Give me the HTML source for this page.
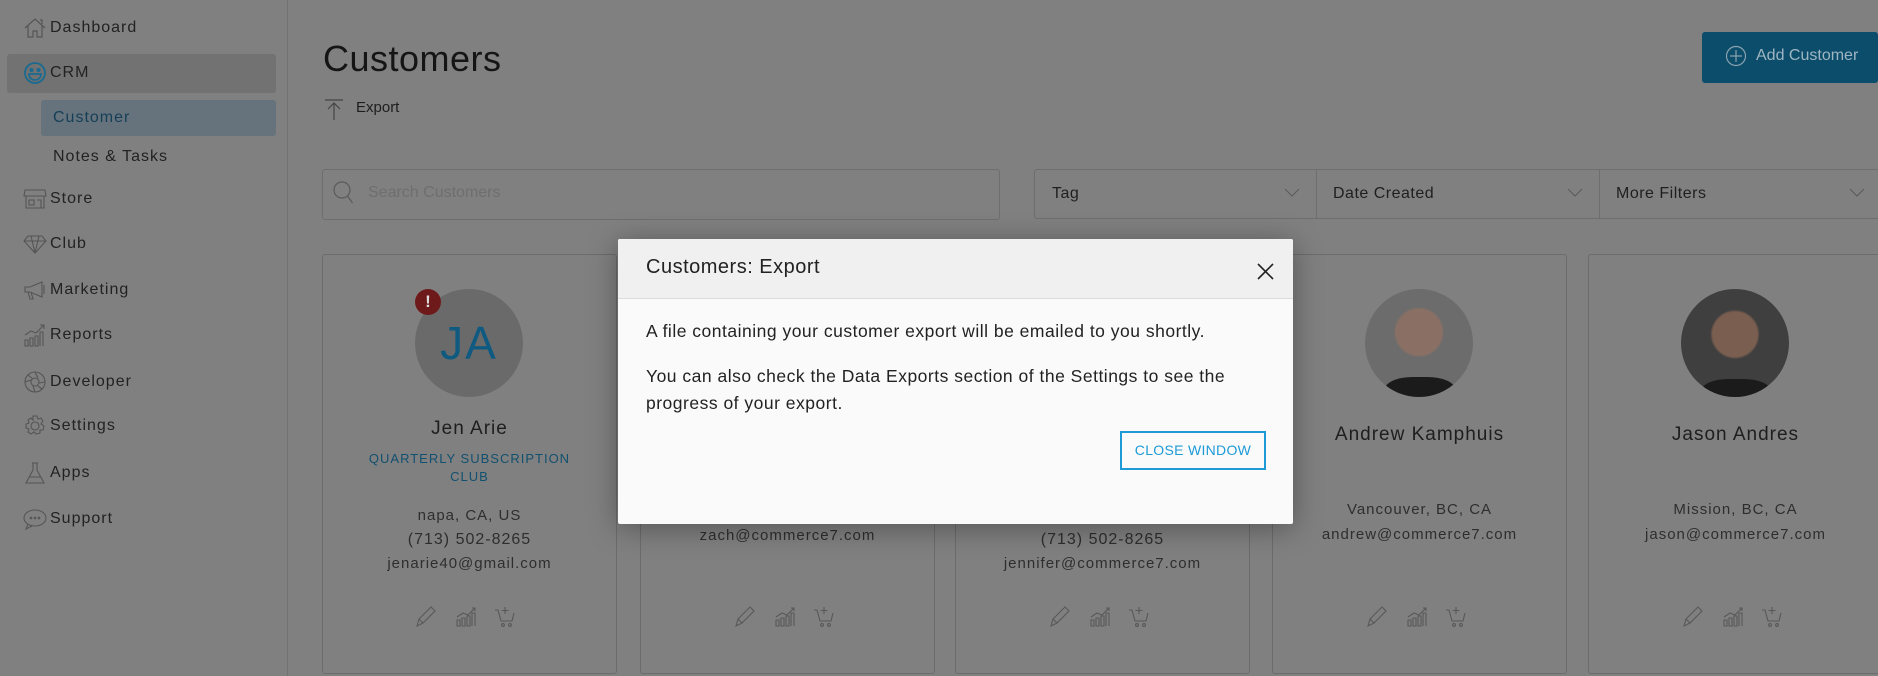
<!DOCTYPE html>
<html><head><meta charset="utf-8">
<style>
*{box-sizing:border-box;margin:0;padding:0}
body{width:1878px;height:676px;overflow:hidden;background:#808080;font-family:"Liberation Sans",sans-serif;position:relative;color:#1c1c1c}
.abs{position:absolute}
.side{left:0;top:0;width:288px;height:676px;border-right:1px solid #727272}
.nav{left:50px;font-size:16px;letter-spacing:1px;color:#222}
.ico{left:22px;width:26px;height:26px}
.card{border:1px solid #6c6c6c;border-radius:3px;width:295px;height:420px;top:254px}
.ctext{width:295px;text-align:center;letter-spacing:1px;font-size:15px;color:#2e2e2e}
.filt{top:169px;height:50px;border:1px solid #6e6e6e;font-size:16px;color:#1f1f1f;padding:15px 17px;letter-spacing:.5px}
</style></head><body>
<div class="abs side"></div>
<!-- sidebar -->
<div class="abs" style="left:7px;top:54px;width:269px;height:39px;background:#727272;border-radius:3px"></div>
<div class="abs" style="left:41px;top:100px;width:235px;height:36px;background:#66737c;border-radius:3px"></div>
<svg class="abs ico" style="top:15px" viewBox="0 0 26 26" fill="none" stroke="#555" stroke-width="1.2"><path d="M3 13L13 4l10 9M6 11v11h5v-6h4v6h5V11M18 5h2v4"/></svg>
<div class="abs nav" style="top:19px">Dashboard</div>
<svg class="abs ico" style="top:60px" viewBox="0 0 26 26" fill="none" stroke="#1a6a90" stroke-width="1.8"><circle cx="13" cy="13" r="10"/><circle cx="9.5" cy="10" r="1.2"/><circle cx="16.5" cy="10" r="1.2"/><path d="M7 14h12c0 4-3 6-6 6s-6-2-6-6z"/></svg>
<div class="abs nav" style="top:64px">CRM</div>
<div class="abs nav" style="top:109px;left:53px;color:#153f57">Customer</div>
<div class="abs nav" style="top:148px;left:53px">Notes &amp; Tasks</div>
<svg class="abs ico" style="top:186px" viewBox="0 0 26 26" fill="none" stroke="#555" stroke-width="1.1"><path d="M3 4h20l1 6H2zM4 10v12h18V10M7 14h5v5H7zM15 14h4v8"/></svg>
<div class="abs nav" style="top:190px">Store</div>
<svg class="abs ico" style="top:231px" viewBox="0 0 26 26" fill="none" stroke="#555" stroke-width="1.1"><path d="M6 5h14l4 5-11 12L2 10zM2 10h22M9 5l4 17 4-17"/></svg>
<div class="abs nav" style="top:235px">Club</div>
<svg class="abs ico" style="top:277px" viewBox="0 0 26 26" fill="none" stroke="#555" stroke-width="1.1"><path d="M3 10h5l12-5v15L8 15H3zM6 15l2 7h3l-2-7M22 8v9"/></svg>
<div class="abs nav" style="top:281px">Marketing</div>
<svg class="abs ico" style="top:322px" viewBox="0 0 26 26" fill="none" stroke="#555" stroke-width="1.1"><path d="M3 24v-6h3v6zM8 24v-8h3v8zM13 24v-10h3v10zM18 24V10h3v14M3 13l6-4 5 2 8-8M18 3h4v4"/></svg>
<div class="abs nav" style="top:326px">Reports</div>
<svg class="abs ico" style="top:369px" viewBox="0 0 26 26" fill="none" stroke="#555" stroke-width="1.1"><circle cx="13" cy="13" r="10"/><circle cx="13" cy="13" r="4"/><path d="M13 3l3 6M23 13l-6 1M13 23l-2-6M3 13l6-2M6 6l5 4M20 20l-4-3"/></svg>
<div class="abs nav" style="top:373px">Developer</div>
<svg class="abs ico" style="top:413px" viewBox="0 0 26 26" fill="none" stroke="#555" stroke-width="1.1"><circle cx="13" cy="13" r="4"/><path d="M11 3h4l1 3 3-1 2 3-2 3 3 2-1 4-3 0 0 3-4 1-2-2-3 2-3-2 1-3-3-1 0-4 3-1-1-3 3-2 2 2z"/></svg>
<div class="abs nav" style="top:417px">Settings</div>
<svg class="abs ico" style="top:460px" viewBox="0 0 26 26" fill="none" stroke="#555" stroke-width="1.1"><path d="M10 3h6M11 3v7L4 23h18L15 10V3M7 17h12"/></svg>
<div class="abs nav" style="top:464px">Apps</div>
<svg class="abs ico" style="top:506px" viewBox="0 0 26 26" fill="none" stroke="#555" stroke-width="1.1"><ellipse cx="13" cy="12" rx="11" ry="8"/><path d="M6 18l-2 5 6-3"/><circle cx="9" cy="12" r=".8"/><circle cx="13" cy="12" r=".8"/><circle cx="17" cy="12" r=".8"/></svg>
<div class="abs nav" style="top:510px">Support</div>

<!-- main header -->
<div class="abs" style="left:323px;top:38px;font-size:36px;color:#151515;letter-spacing:.5px">Customers</div>
<svg class="abs" style="left:324px;top:98px" width="20" height="24" viewBox="0 0 20 24" fill="none" stroke="#444" stroke-width="1.2"><path d="M1 2h18M10 22V5M4 11l6-6 6 6"/></svg>
<div class="abs" style="left:356px;top:99px;font-size:15px;color:#1e1e1e">Export</div>
<div class="abs" style="left:1702px;top:32px;width:176px;height:51px;background:#0b4d6b;border-radius:3px"></div>
<svg class="abs" style="left:1725px;top:45px" width="22" height="22" viewBox="0 0 22 22" fill="none" stroke="#8aa3b1" stroke-width="1.2"><circle cx="11" cy="11" r="9.5"/><path d="M11 5v12M5 11h12"/></svg>
<div class="abs" style="left:1756px;top:47px;font-size:16px;color:#9fb5c2">Add Customer</div>

<!-- search and filters -->
<div class="abs" style="left:322px;top:169px;width:678px;height:51px;border:1px solid #6e6e6e;border-radius:3px"></div>
<svg class="abs" style="left:332px;top:180px" width="24" height="26" viewBox="0 0 24 26" fill="none" stroke="#5a5a5a" stroke-width="1.2"><circle cx="10" cy="10" r="8"/><path d="M15.5 16l5 7"/></svg>
<div class="abs" style="left:368px;top:184px;font-size:16px;color:#6e6e6e">Search Customers</div>
<div class="abs filt" style="left:1034px;width:283px;border-radius:3px 0 0 3px">Tag</div>
<div class="abs filt" style="left:1316px;width:284px;border-left:none">Date Created</div>
<div class="abs filt" style="left:1599px;width:290px;border-left:none">More Filters</div>
<svg class="abs" style="left:1284px;top:188px" width="16" height="10" viewBox="0 0 16 10" fill="none" stroke="#5a5a5a"><path d="M1 1l7 7 7-7"/></svg>
<svg class="abs" style="left:1567px;top:188px" width="16" height="10" viewBox="0 0 16 10" fill="none" stroke="#5a5a5a"><path d="M1 1l7 7 7-7"/></svg>
<svg class="abs" style="left:1849px;top:188px" width="16" height="10" viewBox="0 0 16 10" fill="none" stroke="#5a5a5a"><path d="M1 1l7 7 7-7"/></svg>

<!-- cards -->
<div class="abs card" style="left:322px"></div>
<div class="abs card" style="left:640px"></div>
<div class="abs card" style="left:955px"></div>
<div class="abs card" style="left:1272px"></div>
<div class="abs card" style="left:1588px"></div>

<div class="abs" style="left:415px;top:289px;width:108px;height:108px;border-radius:50%;background:#6a6a6a"></div>
<div class="abs" style="left:415px;top:316px;width:108px;text-align:center;font-size:46px;color:#0e5a80;letter-spacing:2px">JA</div>
<div class="abs" style="left:415px;top:289px;width:26px;height:26px;border-radius:50%;background:#6e1a1a;color:#ddd;text-align:center;font-weight:bold;font-size:17px;line-height:26px">!</div>
<div class="abs ctext" style="left:322px;top:418px;font-size:19px;color:#1e1e1e">Jen Arie</div>
<div class="abs ctext" style="left:322px;top:450px;font-size:13px;color:#11506f;line-height:18px">QUARTERLY SUBSCRIPTION<br>CLUB</div>
<div class="abs ctext" style="left:322px;top:507px">napa, CA, US</div>
<div class="abs ctext" style="left:322px;top:531px;font-size:16px">(713) 502-8265</div>
<div class="abs ctext" style="left:322px;top:555px">jenarie40@gmail.com</div>

<div class="abs ctext" style="left:640px;top:527px">zach@commerce7.com</div>
<div class="abs ctext" style="left:955px;top:531px;font-size:16px">(713) 502-8265</div>
<div class="abs ctext" style="left:955px;top:555px">jennifer@commerce7.com</div>

<div class="abs" style="left:1365px;top:289px;width:108px;height:108px;border-radius:50%;background:radial-gradient(circle at 50% 40%,#8a7064 0 27%,#6c6c6c 30% 100%);overflow:hidden"><div style="position:absolute;left:20px;top:88px;width:70px;height:30px;background:#1b1b1b;border-radius:40% 40% 0 0"></div></div>
<div class="abs ctext" style="left:1272px;top:424px;font-size:19px;color:#1e1e1e">Andrew Kamphuis</div>
<div class="abs ctext" style="left:1272px;top:501px">Vancouver, BC, CA</div>
<div class="abs ctext" style="left:1272px;top:526px">andrew@commerce7.com</div>

<div class="abs" style="left:1681px;top:289px;width:108px;height:108px;border-radius:50%;background:radial-gradient(circle at 50% 42%,#7a5e50 0 27%,#3f3f3f 30% 100%);overflow:hidden"><div style="position:absolute;left:20px;top:90px;width:70px;height:30px;background:#1b1b1b;border-radius:40% 40% 0 0"></div></div>
<div class="abs ctext" style="left:1588px;top:424px;font-size:19px;color:#1e1e1e">Jason Andres</div>
<div class="abs ctext" style="left:1588px;top:501px">Mission, BC, CA</div>
<div class="abs ctext" style="left:1588px;top:526px">jason@commerce7.com</div>

<!-- card action icons -->
<svg width="0" height="0" style="position:absolute"><defs>
<g id="acts" fill="none" stroke="#585858" stroke-width="1.1">
<path d="M2 22l2-7L16 3l4 4L8 19zM4 15l4 4"/>
<path d="M42 22v-6h3v6zM47 22v-8h3v8zM52 22v-10h3v10zM57 22V9h3v13M42 13l6-4 5 2 7-7M57 4h3v3"/>
<path d="M80 6h3l3 11h11l2-8M90 3v7M86.5 6.5h7"/><circle cx="88" cy="21" r="1.4"/><circle cx="95" cy="21" r="1.4"/>
</g></defs></svg>
<svg class="abs" style="left:415px;top:604px" width="104" height="26"><use href="#acts"/></svg>
<svg class="abs" style="left:734px;top:604px" width="104" height="26"><use href="#acts"/></svg>
<svg class="abs" style="left:1049px;top:604px" width="104" height="26"><use href="#acts"/></svg>
<svg class="abs" style="left:1366px;top:604px" width="104" height="26"><use href="#acts"/></svg>
<svg class="abs" style="left:1682px;top:604px" width="104" height="26"><use href="#acts"/></svg>

<!-- modal -->
<div class="abs" style="left:618px;top:239px;width:675px;height:285px;background:#fafafa;border-radius:2px;box-shadow:0 4px 30px rgba(0,0,0,.35)">
  <div style="height:60px;background:#f0f0f0;border-bottom:1px solid #dcdcdc;border-radius:2px 2px 0 0"></div>
</div>
<div class="abs" style="left:646px;top:256px;font-size:20px;color:#222;letter-spacing:.5px">Customers: Export</div>
<svg class="abs" style="left:1257px;top:263px" width="17" height="17" viewBox="0 0 17 17" stroke="#222" stroke-width="1.6"><path d="M1 1l15 15M16 1L1 16"/></svg>
<div class="abs" style="left:646px;top:321px;font-size:17.5px;color:#222;letter-spacing:.5px">A file containing your customer export will be emailed to you shortly.</div>
<div class="abs" style="left:646px;top:363px;width:630px;font-size:17.5px;color:#222;letter-spacing:.5px;line-height:27px">You can also check the Data Exports section of the Settings to see the progress of your export.</div>
<div class="abs" style="left:1120px;top:431px;width:146px;height:39px;border:2px solid #1e9bd7;color:#1e9bd7;font-size:14px;text-align:center;line-height:35px;letter-spacing:.3px">CLOSE WINDOW</div>
</body></html>
